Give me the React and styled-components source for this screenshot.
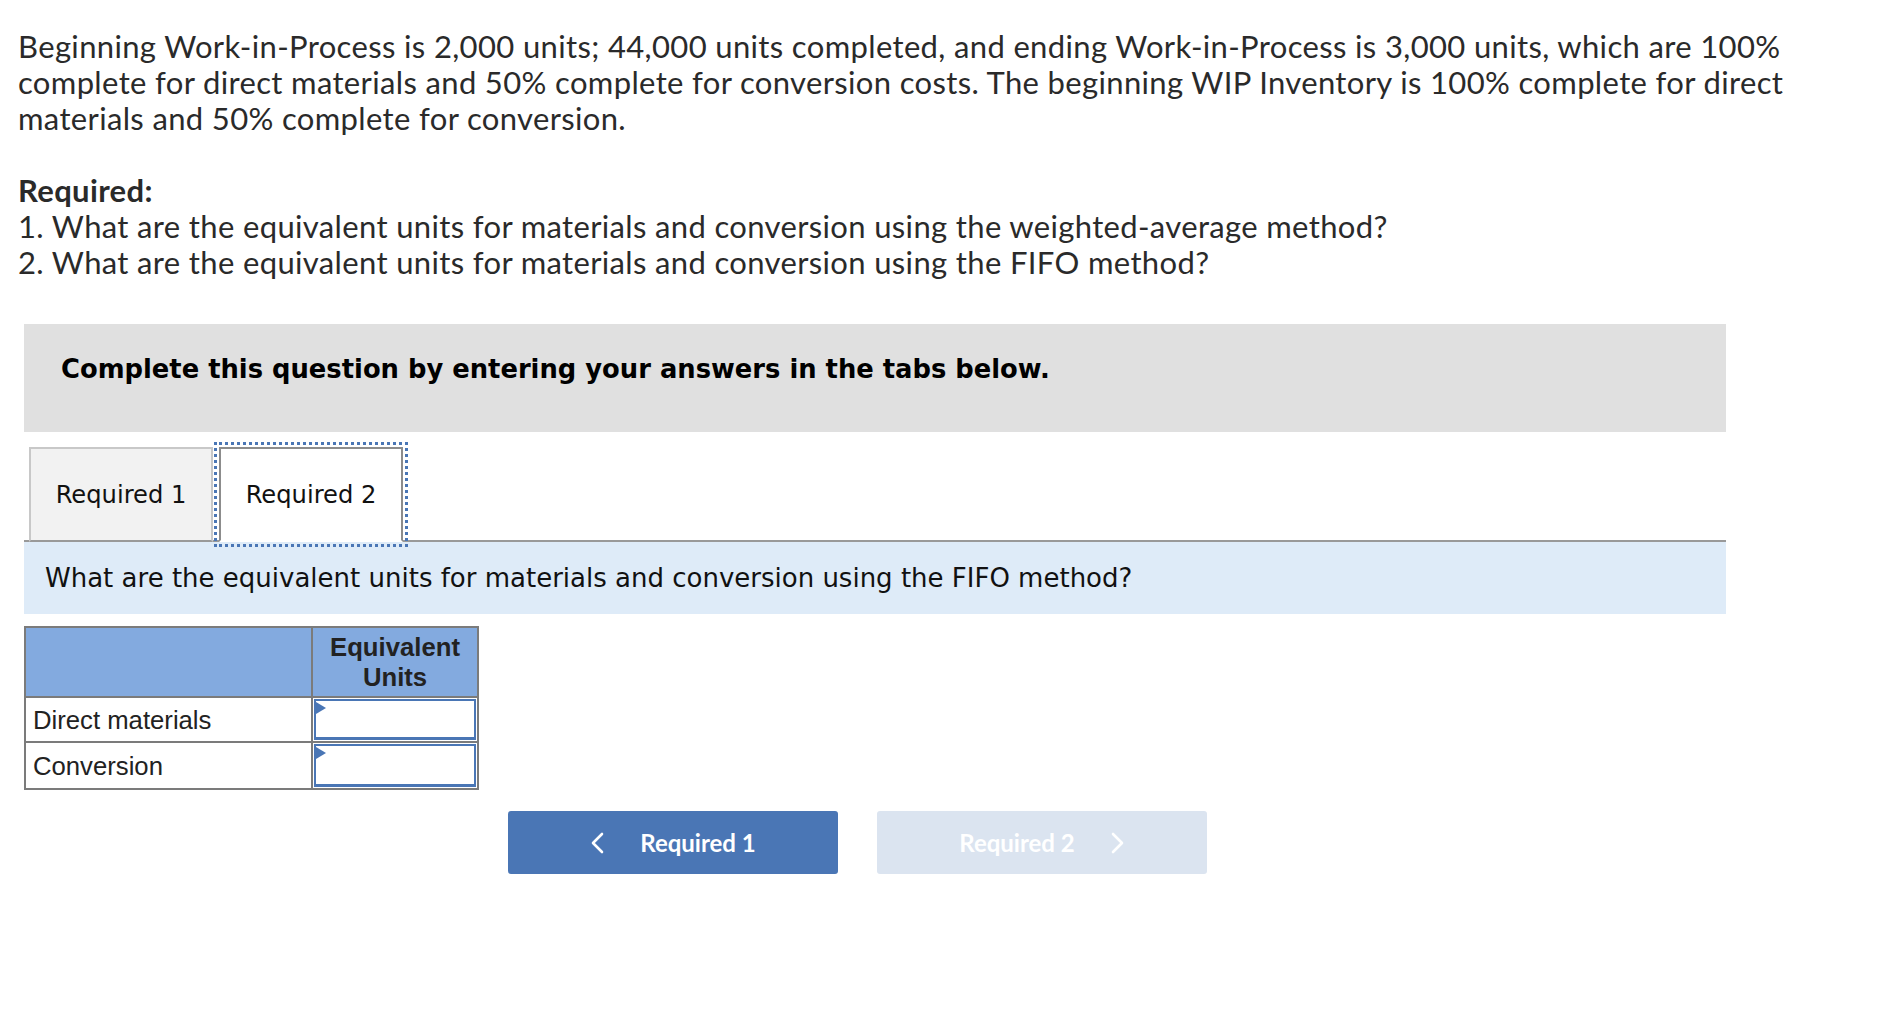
import React from 'react';
import styled, { createGlobalStyle } from 'styled-components';

const GlobalStyle = createGlobalStyle`
  body {
    margin: 0;
    background: #fff;
  }
`;

const Page = styled.div`
  padding: 28px 0 40px 18px;
`;

const Prose = styled.p`
  margin: 0;
  font-family: Lato, 'Open Sans', sans-serif;
  font-size: 31px;
  letter-spacing: 0.35px;
  line-height: 36px;
  color: #2a2a2a;
  white-space: nowrap;
`;

const RequiredBlock = styled(Prose)`
  margin-top: 36px;
`;

const Strong = styled.strong`
  font-weight: 700;
`;

const Panel = styled.section`
  margin-top: 44px;
  margin-left: 6px;
  width: 1702px;
`;

const Instruction = styled.div`
  height: 108px;
  box-sizing: border-box;
  padding: 28px 0 0 37px;
  background: #e0e0e0;
  font-family: 'DejaVu Sans', Verdana, sans-serif;
  font-weight: 700;
  font-size: 25.8px;
  line-height: 34px;
  color: #000;
`;

const TabStrip = styled.div`
  display: flex;
  gap: 6px;
  margin-top: 15px;
  padding-left: 5px;
  border-bottom: 2px solid #999;
`;

const Tab = styled.button`
  width: 184px;
  height: 95px;
  margin-bottom: -2px;
  box-sizing: border-box;
  border: 2px solid ${({ $active }) => ($active ? '#8c8c8c' : '#c8c8c8')};
  border-bottom: ${({ $active }) => ($active ? '2px solid #fff' : '2px solid #999')};
  background: ${({ $active }) => ($active ? '#fff' : '#f2f2f2')};
  outline: ${({ $active }) => ($active ? '3px dotted #4a76b5' : 'none')};
  outline-offset: 2px;
  font-family: 'DejaVu Sans', Verdana, sans-serif;
  font-size: 24.2px;
  color: #111;
  padding: 0;
  cursor: pointer;
`;

const Prompt = styled.div`
  display: flex;
  align-items: center;
  height: 72px;
  padding-left: 21px;
  background: #deebf8;
  font-family: 'DejaVu Sans', Verdana, sans-serif;
  font-size: 26px;
  color: #111;
`;

const Grid = styled.table`
  margin-top: 12px;
  border-collapse: collapse;
  font-family: 'Liberation Sans', Arial, sans-serif;
  font-size: 25.7px;
  color: #222;
`;

const HeadCell = styled.th`
  height: 68px;
  padding: 0;
  width: ${({ $w }) => $w}px;
  background: #83aadf;
  border: 2px solid #7b7b7b;
  font-weight: 700;
  line-height: 30px;
  text-align: center;
`;

const LabelCell = styled.td`
  height: ${({ $h }) => $h}px;
  padding: 0 0 0 7px;
  border: 2px solid #7b7b7b;
  line-height: 30px;
`;

const InputCell = styled.td`
  padding: 1px;
  border: 2px solid #7b7b7b;
`;

const AnswerBox = styled.div`
  position: relative;
  height: ${({ $h }) => $h}px;
  box-sizing: border-box;
  border: 2px solid #4a76b5;
  border-bottom-width: 3px;
  background: #fff;

  &::before {
    content: '';
    position: absolute;
    top: 1px;
    left: 0;
    border-top: 6px solid transparent;
    border-bottom: 6px solid transparent;
    border-left: 10px solid #4a76b5;
  }
`;

const NavRow = styled.div`
  display: flex;
  gap: 39px;
  margin-top: 21px;
  padding-left: 484px;
`;

const NavButton = styled.button`
  display: flex;
  align-items: center;
  justify-content: center;
  gap: 35px;
  width: 330px;
  height: 63px;
  border: none;
  border-radius: 3px;
  background: ${({ $disabled }) => ($disabled ? '#dbe4f0' : '#4a76b5')};
  color: #fff;
  font-family: Lato, 'Open Sans', sans-serif;
  font-weight: 700;
  font-size: 24px;
  padding: 0;
  cursor: ${({ $disabled }) => ($disabled ? 'default' : 'pointer')};
`;

const Chevron = ({ dir }) => (
  <svg width="15" height="22" viewBox="0 0 15 22" fill="none">
    <polyline
      points={dir === 'left' ? '12,2 3,11 12,20' : '3,2 12,11 3,20'}
      stroke="#fff"
      strokeWidth="2.6"
      strokeLinecap="round"
      strokeLinejoin="round"
    />
  </svg>
);

export default function App() {
  return (
    <>
      <GlobalStyle />
      <Page>
        <Prose>
          Beginning Work-in-Process is 2,000 units; 44,000 units completed, and ending Work-in-Process is 3,000 units, which are 100%
          <br />
          complete for direct materials and 50% complete for conversion costs. The beginning WIP Inventory is 100% complete for direct
          <br />
          materials and 50% complete for conversion.
        </Prose>
        <RequiredBlock>
          <Strong>Required:</Strong>
          <br />
          1. What are the equivalent units for materials and conversion using the weighted-average method?
          <br />
          2. What are the equivalent units for materials and conversion using the FIFO method?
        </RequiredBlock>

        <Panel>
          <Instruction>Complete this question by entering your answers in the tabs below.</Instruction>
          <TabStrip>
            <Tab>Required 1</Tab>
            <Tab $active>Required 2</Tab>
          </TabStrip>
          <Prompt>What are the equivalent units for materials and conversion using the FIFO method?</Prompt>

          <Grid>
            <thead>
              <tr>
                <HeadCell $w={285} />
                <HeadCell $w={164}>
                  Equivalent
                  <br />
                  Units
                </HeadCell>
              </tr>
            </thead>
            <tbody>
              <tr>
                <LabelCell $h={43}>Direct materials</LabelCell>
                <InputCell>
                  <AnswerBox $h={41} />
                </InputCell>
              </tr>
              <tr>
                <LabelCell $h={45}>Conversion</LabelCell>
                <InputCell>
                  <AnswerBox $h={43} />
                </InputCell>
              </tr>
            </tbody>
          </Grid>

          <NavRow>
            <NavButton>
              <Chevron dir="left" />
              <span>Required 1</span>
            </NavButton>
            <NavButton $disabled>
              <span>Required 2</span>
              <Chevron dir="right" />
            </NavButton>
          </NavRow>
        </Panel>
      </Page>
    </>
  );
}
